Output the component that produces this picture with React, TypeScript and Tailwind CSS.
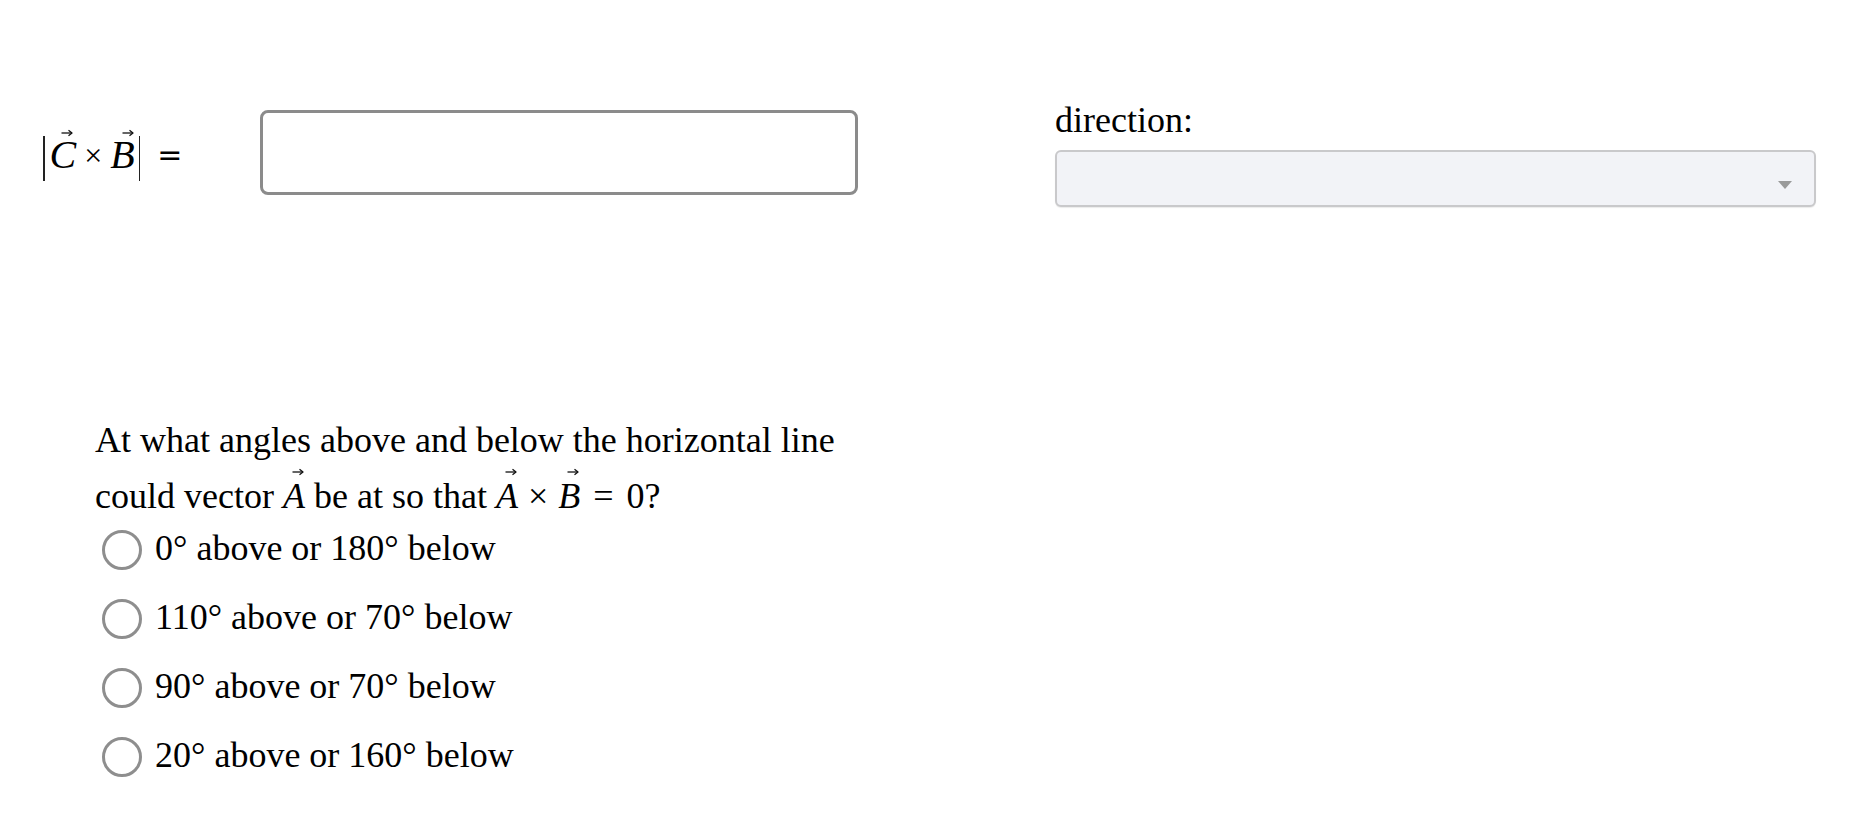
import React from 'react'

function Arrow({ className }: { className: string }) {
  return (
    <svg className={className} width="12" height="8" viewBox="0 0 12 8" fill="none">
      <path d="M0.5 4H11" stroke="#111" strokeWidth="1.3" />
      <path d="M7.5 1.2L11 4L7.5 6.8" stroke="#111" strokeWidth="1.3" strokeLinejoin="round" />
    </svg>
  )
}

function Vec({ letter, arrowClass }: { letter: string; arrowClass: string }) {
  return (
    <span className="relative inline-block italic leading-none">
      {letter}
      <Arrow className={arrowClass} />
    </span>
  )
}

const options = [
  '0° above or 180° below',
  '110° above or 70° below',
  '90° above or 70° below',
  '20° above or 160° below',
]

export default function App() {
  return (
    <div className="min-h-screen bg-white font-['Liberation_Serif','Times_New_Roman',serif] text-[36px] text-black">
      {/* top row: magnitude input + direction select */}
      <div className="flex items-start pl-[43px] pt-[100px]">
        <div className="mt-[10px] flex h-[85px] w-[217px] items-center pt-[5px] leading-[40px]">
          <span className="mt-[6px] h-[45px] w-[1.5px] bg-[#222]" />
          <span className="ml-[5px] text-[40px]">
            <Vec letter="C" arrowClass="absolute left-[11px] top-[-6px]" />
          </span>
          <span className="mx-[8px] text-[32px]">×</span>
          <span className="text-[40px]">
            <Vec letter="B" arrowClass="absolute left-[12px] top-[-6px]" />
          </span>
          <span className="ml-[4px] mt-[6px] h-[45px] w-[1.5px] bg-[#222]" />
          <span className="ml-[17px] font-['DejaVu_Sans',sans-serif] text-[30px]">=</span>
        </div>
        <input
          type="text"
          className="mt-[10px] h-[85px] w-[598px] rounded-[8px] border-[3px] border-[#8b8b8b] bg-white outline-none"
        />
        <div className="ml-[197px] flex flex-col">
          <div className="leading-[40px]">direction:</div>
          <div className="mt-[10px] flex h-[57px] w-[761px] items-end justify-end rounded-[6px] border-2 border-[#c9c9cb] bg-[#f2f3f7] pb-[16px] pr-[22px] shadow-[0_1px_1px_rgba(0,0,0,0.08)]">
            <svg width="14" height="8" viewBox="0 0 14 8">
              <path d="M0 0H14L7 8Z" fill="#9a9a9a" />
            </svg>
          </div>
        </div>
      </div>

      {/* question */}
      <div className="mt-[205px] pl-[95px] leading-[56px]">
        <div>At what angles above and below the horizontal line</div>
        <div className="flex items-baseline">
          <span>could vector&nbsp;</span>
          <Vec letter="A" arrowClass="absolute left-[9px] top-[-10px]" />
          <span>&nbsp;be at so that&nbsp;</span>
          <Vec letter="A" arrowClass="absolute left-[9px] top-[-10px]" />
          <span className="mx-[10px]">×</span>
          <Vec letter="B" arrowClass="absolute left-[9px] top-[-10px]" />
          <span className="mx-[13px]">=</span>
          <span>0?</span>
        </div>
      </div>

      <div className="-mt-[9px] flex flex-col pl-[102px]">
        {options.map((o) => (
          <label key={o} className="flex h-[69px] items-center gap-[13px] leading-[40px]">
            <span className="h-[40px] w-[40px] rounded-full border-[3px] border-[#8e8e8e]" />
            <span className="-mt-[4px]">{o}</span>
          </label>
        ))}
      </div>
    </div>
  )
}
